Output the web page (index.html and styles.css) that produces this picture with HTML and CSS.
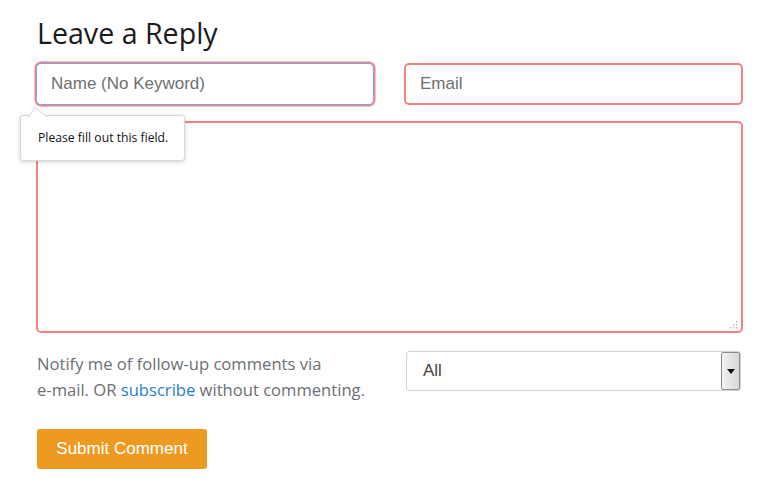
FILE: index.html
```html
<!DOCTYPE html>
<html lang="en">
<head>
<meta charset="utf-8">
<title>Leave a Reply</title>
<link rel="stylesheet" href="styles.css">
</head>
<body>
<div class="page">
  <h3 class="title">Leave a Reply</h3>
  <form class="form">
    <div class="row">
      <div class="field-wrap">
        <input class="field field-focus" type="text" placeholder="Name (No Keyword)">
        <div class="tooltip">
          <svg class="tip-arrow" width="20" height="10" viewBox="0 0 20 10"><path d="M0.5 10 L7.5 0.8 L19 10" fill="#fff" stroke="#d4d4d4" stroke-width="1"/></svg>
          Please fill out this field.
        </div>
      </div>
      <div class="field-wrap">
        <input class="field field-invalid" type="text" placeholder="Email">
      </div>
    </div>
    <div class="area">
      <div class="grip">
        <svg width="9" height="9" viewBox="0 0 9 9"><g fill="#b8b8b8"><rect x="7" y="1" width="1.4" height="1.4"/><rect x="4" y="4" width="1.4" height="1.4"/><rect x="7" y="4" width="1.4" height="1.4"/><rect x="1" y="7" width="1.4" height="1.4"/><rect x="4" y="7" width="1.4" height="1.4"/><rect x="7" y="7" width="1.4" height="1.4"/></g></svg>
      </div>
    </div>
    <div class="row row-bottom">
      <p class="notify">Notify me of follow-up comments via<br>e-mail. OR <a href="#" class="link">subscribe</a> without commenting.</p>
      <div class="select">
        <span class="select-value">All</span>
        <span class="select-btn">
          <svg width="8" height="5" viewBox="0 0 8 5"><path d="M0 0 H8 L4 5 Z" fill="#111"/></svg>
        </span>
      </div>
    </div>
    <button type="button" class="submit">Submit Comment</button>
  </form>
</div>
</body>
</html>
```

FILE: styles.css
```css
html, body {
  margin: 0;
  padding: 0;
  background: #ffffff;
}

.page {
  width: 707px;
  padding: 14px 0 0 36px;
}

.title {
  margin: 0 0 0 1px;
  font-family: "Open Sans", "Noto Sans", sans-serif;
  font-weight: 400;
  font-size: 28.6px;
  line-height: 38px;
  color: #1b1b1b;
}

.form {
  margin-top: 11px;
}

.row {
  display: grid;
  grid-template-columns: 338px 339px;
  column-gap: 30px;
}

.field-wrap {
  position: relative;
}

.field {
  box-sizing: border-box;
  display: block;
  width: 100%;
  height: 42px;
  margin: 0;
  padding: 0 14px;
  border-radius: 5px;
  font-family: "Liberation Sans", Arial, sans-serif;
  font-size: 17px;
  color: #333;
  background: #fff;
  outline: none;
}

.field::placeholder {
  color: #6f6f6f;
}

.field-invalid {
  border: 2px solid #f98080;
}

.field-focus {
  border: 1.5px solid #7aa8e8;
  box-shadow: 0 0 0 1.5px #f98080;
}

.tooltip {
  position: absolute;
  left: -16px;
  top: 52px;
  width: 165px;
  height: 46px;
  box-sizing: border-box;
  padding: 13px 0 0 17px;
  background: #fff;
  border: 1px solid #d8d8d8;
  border-radius: 3px;
  box-shadow: 0 1px 4px rgba(0, 0, 0, 0.18);
  font-family: "Open Sans", "Noto Sans", sans-serif;
  font-size: 12.2px;
  color: #111;
  z-index: 2;
  white-space: nowrap;
}

.tip-arrow {
  position: absolute;
  left: 7px;
  top: -9px;
  display: block;
}

.area {
  position: relative;
  box-sizing: border-box;
  margin-top: 16px;
  width: 707px;
  height: 212px;
  border: 2px solid #f98080;
  border-radius: 5px;
  background: #fff;
}

.grip {
  position: absolute;
  right: 3px;
  bottom: 2px;
  line-height: 0;
}

.row-bottom {
  margin-top: 18px;
  align-items: start;
}

.notify {
  margin: 0 0 0 1px;
  font-family: "Open Sans", "Noto Sans", sans-serif;
  font-size: 16.6px;
  line-height: 26px;
  color: #6b6f73;
}

.link {
  color: #1e7fd8;
  text-decoration: none;
}

.select {
  box-sizing: border-box;
  margin-left: 2px;
  width: 335px;
  height: 40px;
  border: 1px solid #d2d2d2;
  border-radius: 3px;
  display: flex;
  align-items: center;
  justify-content: space-between;
  background: #fff;
}

.select-value {
  padding-left: 16px;
  font-family: "Liberation Sans", Arial, sans-serif;
  font-size: 17px;
  color: #444;
}

.select-btn {
  box-sizing: border-box;
  width: 19px;
  height: 38px;
  border: 1px solid #8c8c8c;
  border-radius: 2px;
  background: linear-gradient(to right, #f2f2f2, #d6d6d6);
  display: flex;
  align-items: center;
  justify-content: center;
}

.submit {
  display: block;
  margin: 26px 0 0 1px;
  width: 170px;
  height: 40px;
  padding: 0;
  border: none;
  border-radius: 3px;
  background: #ec9a22;
  color: #fff;
  font-family: "Liberation Sans", Arial, sans-serif;
  font-size: 17px;
  cursor: pointer;
}
```
